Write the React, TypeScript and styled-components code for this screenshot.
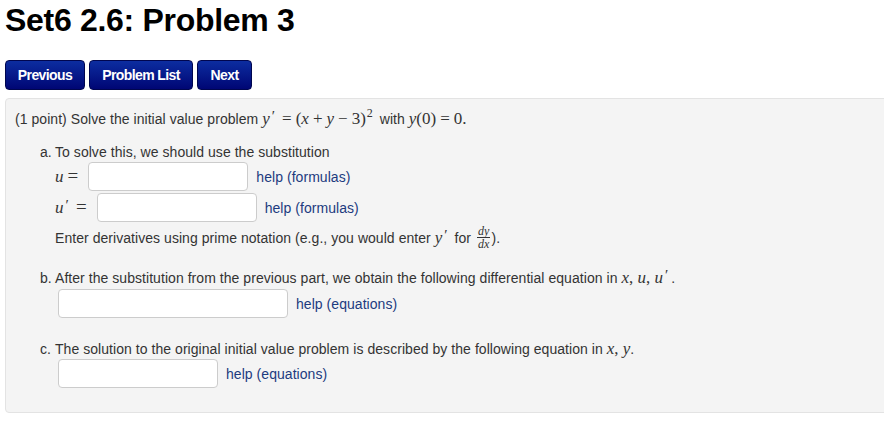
import { createGlobalStyle, styled } from "styled-components";

const GlobalStyle = createGlobalStyle`
  html, body {
    margin: 0;
    padding: 0;
    background: #fff;
    overflow: hidden;
  }
  body {
    font-family: "Liberation Sans", Arial, sans-serif;
    color: #333;
  }
`;

const Page = styled.div`
  padding: 2px 0 0 5px;
  width: 920px;
`;

const Title = styled.h2`
  margin: 0 0 22px;
  font-size: 32px;
  line-height: 36px;
  font-weight: bold;
  color: #000;
  letter-spacing: -0.3px;
`;

const NavBar = styled.div`
  display: flex;
  gap: 4px;
  margin-bottom: 8px;
`;

const NavButton = styled.button<{ $w: number }>`
  width: ${(p) => p.$w}px;
  height: 30px;
  padding: 0;
  border: 1px solid #00064f;
  border-radius: 4px;
  background: linear-gradient(to bottom, #0c2da0, #000674);
  color: #fff;
  font-family: "Liberation Sans", Arial, sans-serif;
  font-size: 14px;
  font-weight: bold;
  letter-spacing: -0.6px;
  cursor: pointer;
`;

const Panel = styled.div`
  background: #f4f4f4;
  border: 1px solid #e3e3e3;
  border-radius: 4px;
  padding: 10px 9px 24px;
  font-size: 14px;
  line-height: 20px;
  letter-spacing: 0.05px;
`;

const Intro = styled.div`
  margin-bottom: 13px;
`;

const Part = styled.div<{ $top: number }>`
  display: flex;
  margin: ${(p) => p.$top}px 0 0 25px;
`;

const Marker = styled.span`
  width: 15px;
  flex: none;
`;

const Body = styled.div`
  flex: 1;
`;

const Line = styled.div`
  height: 20px;
`;

const AnswerRow = styled.div<{ $gap?: number }>`
  display: flex;
  align-items: center;
  gap: 6px;
  margin-top: ${(p) => p.$gap ?? 0}px;
`;

const Label = styled.span`
  font-family: "Liberation Serif", "Times New Roman", serif;
  font-size: 17px;
  line-height: 20px;
  white-space: nowrap;
`;

const Answer = styled.input<{ $w: number; $shift?: number }>`
  width: ${(p) => p.$w}px;
  height: 29px;
  box-sizing: border-box;
  border: 1px solid #ccc;
  border-radius: 4px;
  background: #fff;
  margin: 0 2px 0 ${(p) => p.$shift ?? 0}px;
`;

const Help = styled.a`
  color: #1d3b7f;
  text-decoration: none;
  font-size: 14px;
`;

const Note = styled.div`
  margin-top: 6px;
  height: 20px;
`;

const Math = styled.span`
  font-family: "Liberation Serif", "Times New Roman", serif;
  font-size: 17px;
  line-height: 14px;
  letter-spacing: 0;
  white-space: nowrap;
`;

const V = styled.i`
  font-style: italic;
`;

const Prime = styled.span`
  margin: 0 3px 0 2px;
  font-size: 15px;
  position: relative;
  top: -3px;
`;

const Op = styled.span`
  margin: 0 4px;
`;

const Eq = styled.span`
  margin: 0 4px;
  font-size: 19px;
`;

const Sup = styled.sup`
  font-size: 12px;
  vertical-align: 7px;
  line-height: 0;
  margin: 0 3px 0 1px;
`;

const Frac = styled.span`
  display: inline-block;
  vertical-align: -5px;
  text-align: center;
  font-family: "Liberation Serif", "Times New Roman", serif;
  font-style: italic;
  font-size: 12px;
  line-height: 12px;
  margin: -3px 1px -3px 6px;
`;

const FracTop = styled.span`
  display: block;
  border-bottom: 1px solid #333;
  padding: 0 1px;
`;

const FracBottom = styled.span`
  display: block;
`;

function App() {
  return (
    <Page>
      <GlobalStyle />
      <Title>Set6 2.6: Problem 3</Title>
      <NavBar>
        <NavButton $w={80}>Previous</NavButton>
        <NavButton $w={104}>Problem List</NavButton>
        <NavButton $w={55}>Next</NavButton>
      </NavBar>
      <Panel>
        <Intro>
          (1 point) Solve the initial value problem{" "}
          <Math>
            <V>y</V>
            <Prime>′</Prime>
            <Op>=</Op>(<V>x</V>
            <Op>+</Op>
            <V>y</V>
            <Op>−</Op>3)<Sup>2</Sup>
          </Math>{" "}
          with{" "}
          <Math>
            <V>y</V>(0)<Op>=</Op>0.
          </Math>
        </Intro>

        <Part $top={0}>
          <Marker>a.</Marker>
          <Body>
            <Line>To solve this, we should use the substitution</Line>
            <AnswerRow>
              <Label>
                <V>u</V>
                <Eq>=</Eq>
              </Label>
              <Answer $w={160} />
              <Help href="#">help (formulas)</Help>
            </AnswerRow>
            <AnswerRow $gap={2}>
              <Label>
                <V>u</V>
                <Prime>′</Prime>
                <Eq>=</Eq>
              </Label>
              <Answer $w={160} />
              <Help href="#">help (formulas)</Help>
            </AnswerRow>
            <Note>
              Enter derivatives using prime notation (e.g., you would enter{" "}
              <Math>
                <V>y</V>
                <Prime>′</Prime>
              </Math>{" "}
              for
              <Frac>
                <FracTop>dy</FracTop>
                <FracBottom>dx</FracBottom>
              </Frac>
              ).
            </Note>
          </Body>
        </Part>

        <Part $top={20}>
          <Marker>b.</Marker>
          <Body>
            <Line>
              After the substitution from the previous part, we obtain the following differential
              equation in{" "}
              <Math>
                <V>x</V>, <V>u</V>, <V>u</V>
                <Prime>′</Prime>
              </Math>
              .
            </Line>
            <AnswerRow $gap={1}>
              <Answer $w={230} $shift={3} />
              <Help href="#">help (equations)</Help>
            </AnswerRow>
          </Body>
        </Part>

        <Part $top={21}>
          <Marker>c.</Marker>
          <Body>
            <Line>
              The solution to the original initial value problem is described by the following
              equation in{" "}
              <Math>
                <V>x</V>, <V>y</V>
              </Math>
              .
            </Line>
            <AnswerRow>
              <Answer $w={160} $shift={3} />
              <Help href="#">help (equations)</Help>
            </AnswerRow>
          </Body>
        </Part>
      </Panel>
    </Page>
  );
}

export default App;
